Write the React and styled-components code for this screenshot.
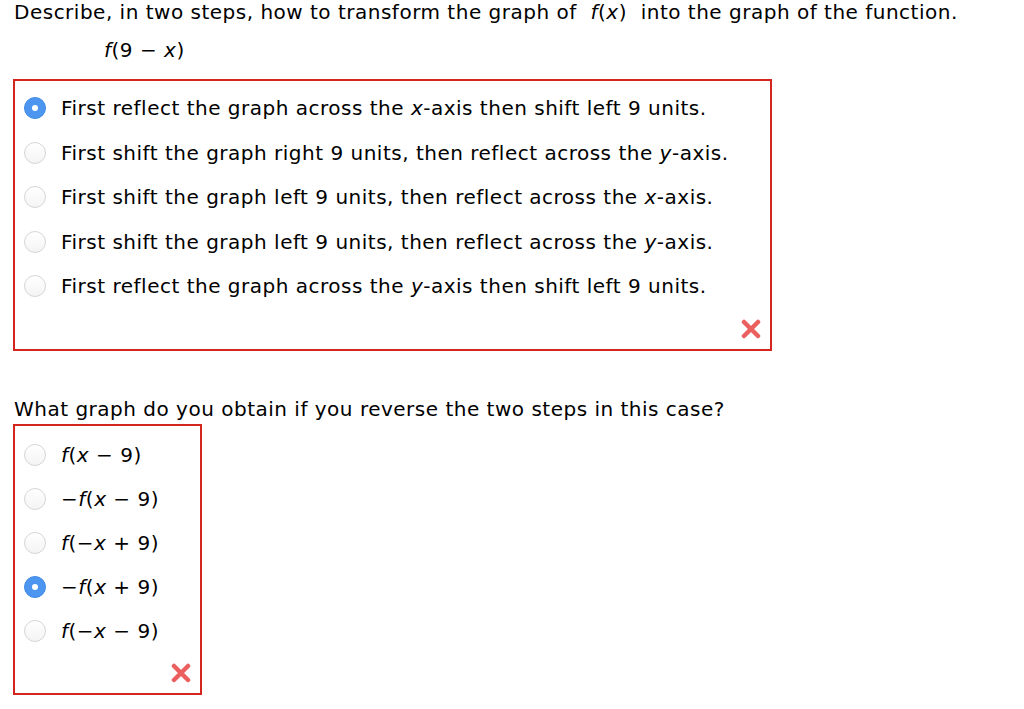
import React from 'react';
import styled, { createGlobalStyle } from 'styled-components';

const Global = createGlobalStyle`
  body {
    margin: 0;
    background: #fff;
    font-family: "DejaVu Sans", Verdana, sans-serif;
    color: #000;
  }
`;

const Page = styled.div`
  padding: 0 0 0 14px;
  font-size: 20px;
  letter-spacing: 0.5px;
`;

const Prompt = styled.div`
  line-height: 24px;
`;

const Formula = styled.div`
  line-height: 24px;
  padding: 14px 0 0 90px;
  height: 41px;
`;

const Box = styled.div`
  box-sizing: border-box;
  width: ${p => p.$w}px;
  margin-left: -1px;
  border: 2px solid #d4261f;
  padding: ${p => p.$pad}px 0 0 9px;
`;

const Row = styled.label`
  display: flex;
  align-items: center;
  height: ${p => p.$h}px;
`;

const Radio = styled.span`
  box-sizing: border-box;
  width: 22px;
  height: 22px;
  border-radius: 50%;
  flex: none;
  margin-right: 15px;
  display: flex;
  align-items: center;
  justify-content: center;
  ${p => p.$on
    ? `background: #4d96f0; border: 1px solid #3f88e6;`
    : `background: linear-gradient(#fff, #f4f4f4); border: 1px solid #d6d6d6;`}
  &::after {
    content: '';
    display: ${p => (p.$on ? 'block' : 'none')};
    width: 6px;
    height: 6px;
    border-radius: 50%;
    background: #fff;
  }
`;

const Wrong = styled.div`
  display: flex;
  justify-content: flex-end;
  align-items: center;
  height: ${p => p.$h}px;
  padding-right: ${p => p.$r}px;
`;

const Question = styled.div`
  line-height: 24px;
  padding: 46px 0 0;
  height: 24px;
  margin-bottom: 3px;
`;

const I = styled.i`
  font-style: italic;
`;

const Cross = () => (
  <svg width="20" height="20" viewBox="0 0 20 20">
    <path d="M3 3 L17 17 M17 3 L3 17" stroke="#ec5f5f" strokeWidth="4.5" strokeLinecap="round" />
  </svg>
);

const first = [
  <>First reflect the graph across the <I>x</I>-axis then shift left 9 units.</>,
  <>First shift the graph right 9 units, then reflect across the <I>y</I>-axis.</>,
  <>First shift the graph left 9 units, then reflect across the <I>x</I>-axis.</>,
  <>First shift the graph left 9 units, then reflect across the <I>y</I>-axis.</>,
  <>First reflect the graph across the <I>y</I>-axis then shift left 9 units.</>,
];

const second = [
  <><I>f</I>(<I>x</I> − 9)</>,
  <>−<I>f</I>(<I>x</I> − 9)</>,
  <><I>f</I>(−<I>x</I> + 9)</>,
  <>−<I>f</I>(<I>x</I> + 9)</>,
  <><I>f</I>(−<I>x</I> − 9)</>,
];

export default function App() {
  return (
    <Page>
      <Global />
      <Prompt>
        Describe, in two steps, how to transform the graph of&nbsp; <I>f</I>(<I>x</I>)&nbsp; into the graph of the function.
      </Prompt>
      <Formula><I>f</I>(9 − <I>x</I>)</Formula>
      <Box $w={759} $pad={5}>
        {first.map((t, i) => (
          <Row key={i} $h={44.5}>
            <Radio $on={i === 0} />
            <span>{t}</span>
          </Row>
        ))}
        <Wrong $h={40} $r={9}><Cross /></Wrong>
      </Box>
      <Question>What graph do you obtain if you reverse the two steps in this case?</Question>
      <Box $w={189} $pad={7}>
        {second.map((t, i) => (
          <Row key={i} $h={44}>
            <Radio $on={i === 3} />
            <span>{t}</span>
          </Row>
        ))}
        <Wrong $h={40} $r={9}><Cross /></Wrong>
      </Box>
    </Page>
  );
}
